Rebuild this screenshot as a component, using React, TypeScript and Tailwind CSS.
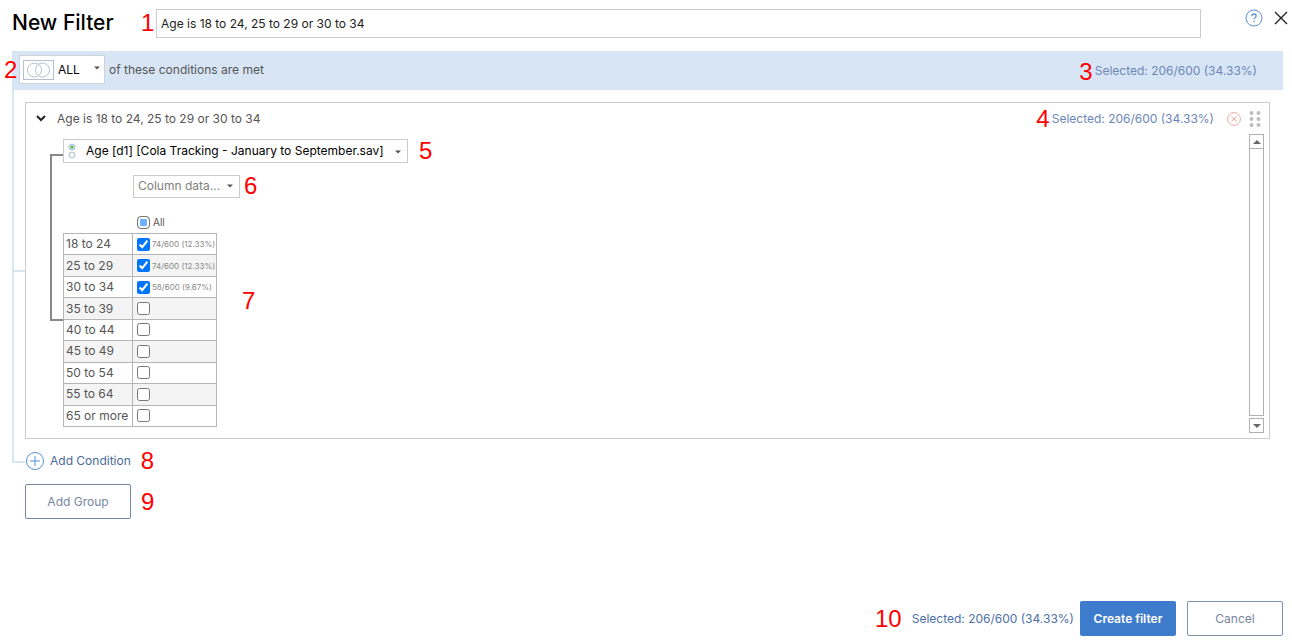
import { useState } from 'react'

const AGES = [
  { label: '18 to 24', count: '74/600 (12.33%)' },
  { label: '25 to 29', count: '74/600 (12.33%)' },
  { label: '30 to 34', count: '58/600 (9.67%)' },
  { label: '35 to 39', count: '' },
  { label: '40 to 44', count: '' },
  { label: '45 to 49', count: '' },
  { label: '50 to 54', count: '' },
  { label: '55 to 64', count: '' },
  { label: '65 or more', count: '' },
]

const SELECTED = 'Selected: 206/600 (34.33%)'

function Marker({ n, className = '' }: { n: number; className?: string }) {
  return (
    <span className={`font-['Liberation_Sans',sans-serif] text-2xl leading-6 text-[#f00] ${className}`}>{n}</span>
  )
}

function Caret({ className = '' }: { className?: string }) {
  return (
    <svg viewBox="0 0 6 4" className={`pointer-events-none absolute h-1 w-1.5 ${className}`}>
      <path d="M0 0.5h6L3 3.5z" fill="#555" />
    </svg>
  )
}

function ScrollBar() {
  return (
    <div className="flex w-[15px] shrink-0 flex-col">
      <button type="button" aria-label="Scroll up" className="flex h-[15px] items-center justify-center border border-[#b0b0b0]">
        <svg viewBox="0 0 8 4" className="h-1 w-2"><path d="M0 4h8L4 0z" fill="#666" /></svg>
      </button>
      <div className="-mt-px mb-0.5 flex-1 border border-[#b0b0b0]" />
      <button type="button" aria-label="Scroll down" className="flex h-[15px] items-center justify-center border border-[#b0b0b0]">
        <svg viewBox="0 0 8 4" className="h-1 w-2"><path d="M0 0h8L4 4z" fill="#666" /></svg>
      </button>
    </div>
  )
}

export default function App() {
  const [name, setName] = useState('Age is 18 to 24, 25 to 29 or 30 to 34')
  const [checked, setChecked] = useState([0, 1, 2])

  const toggle = (i: number) => {
    setChecked((prev) => (prev.includes(i) ? prev.filter((c) => c !== i) : [...prev, i]))
  }

  const toggleAll = () => {
    setChecked((prev) => (prev.length === AGES.length ? [] : AGES.map((_, i) => i)))
  }

  return (
    <main className="flex min-h-screen flex-col bg-white pl-3 font-[Inter,sans-serif] text-xs text-[#555]">

      {/* Header */}
      <header className="flex h-[51px] items-start pt-[9px] pr-0.5">
        <h1 className="w-[129px] text-[21px] leading-7 font-medium whitespace-nowrap text-black">New Filter</h1>
        <Marker n={1} className="w-[15px] pt-0.5" />
        <input
          aria-label="Filter name"
          value={name}
          onChange={(e) => setName(e.target.value)}
          className="h-[29px] min-w-0 flex-1 border border-[#ccc] px-1 text-[#222] outline-none"
        />
        <button type="button" aria-label="Help" className="mr-[11px] ml-11">
          <svg viewBox="0 0 18 18" className="h-[18px] w-[18px]" fill="none" stroke="#5b91d8">
            <circle cx="9" cy="9" r="8" />
            <path d="M6.9 7.2c0-1.4.9-2.2 2.1-2.2s2.1.8 2.1 2c0 1.6-2 1.7-2 3.6" strokeWidth="1.3" />
            <path d="M9.1 11.8v1.4" strokeWidth="1.3" />
          </svg>
        </button>
        <button type="button" aria-label="Close" className="mr-0.5 pt-0.5">
          <svg viewBox="0 0 14 14" className="h-3.5 w-3.5" stroke="#222" strokeWidth="1.4">
            <path d="M1 1l12 12M13 1L1 13" />
          </svg>
        </button>
      </header>

      {/* Group bar */}
      <div className="relative mr-[9px] flex h-[39px] items-center bg-[#d8e5f5] pr-[26px] pb-0.5 pl-[7px]">
        <Marker n={2} className="absolute -left-2" />
        <div className="relative mr-1 flex h-[29px] w-[86px] items-center border border-[#ccd3dd] bg-white pl-[3px]">
          <svg viewBox="0 0 31 20" className="h-5 w-[31px] shrink-0" fill="none" stroke="#b4c0d2">
            <rect x="0.5" y="0.5" width="30" height="19" />
            <circle cx="11.5" cy="10" r="7" />
            <circle cx="19.5" cy="10" r="7" />
          </svg>
          <select aria-label="Match" className="h-full w-full appearance-none pl-1 text-black outline-none">
            <option>ALL</option>
            <option>ANY</option>
          </select>
          <Caret className="top-2.5 right-1" />
        </div>
        <span>of these conditions are met</span>
        <Marker n={3} className="ml-auto pt-1" />
        <span className="ml-0.5 pt-0.5 text-[#6b87b8]">{SELECTED}</span>
      </div>

      {/* Tree */}
      <div className="flex pr-[22px]">
        <div className="flex w-[13px] shrink-0 flex-col pb-2.5">
          <div className="h-[182px] border-b-2 border-l-2 border-[#d8e5f5]" />
          <div className="flex-1 border-b-2 border-l-2 border-[#d8e5f5]" />
        </div>

        <div className="min-w-0 flex-1 pt-3">
          <section className="border border-[#ccc] pr-[5px] pb-[5px] pl-2.5">
            <div className="flex h-[31px] items-center">
              <button type="button" aria-label="Collapse" className="mr-[11px]">
                <svg viewBox="0 0 10 7" className="h-[7px] w-2.5" fill="none" stroke="#222" strokeWidth="2">
                  <path d="M1 1l4 4 4-4" />
                </svg>
              </button>
              <span>Age is 18 to 24, 25 to 29 or 30 to 34</span>
              <Marker n={4} className="ml-auto" />
              <span className="ml-0.5 text-[#6b87b8]">{SELECTED}</span>
              <button type="button" aria-label="Remove condition" className="mr-2 ml-[13px]">
                <svg viewBox="0 0 14 14" className="h-3.5 w-3.5" fill="none" stroke="#efa9a2">
                  <circle cx="7" cy="7" r="6.4" />
                  <path d="M4.5 4.5l5 5M9.5 4.5l-5 5" />
                </svg>
              </button>
              <svg viewBox="0 0 12 16" className="mr-[3px] h-4 w-3" fill="#bdbdbd">
                <circle cx="2.5" cy="2" r="2" />
                <circle cx="9.5" cy="2" r="2" />
                <circle cx="2.5" cy="8" r="2" />
                <circle cx="9.5" cy="8" r="2" />
                <circle cx="2.5" cy="14" r="2" />
                <circle cx="9.5" cy="14" r="2" />
              </svg>
            </div>

            <div className="flex">
              <div className="mt-5 ml-3.5 h-[167px] w-[13px] shrink-0 border-y-2 border-l-2 border-[#888]" />

              <div className="min-w-0 flex-1 pt-[5px] pb-1.5">
                <div className="flex items-center gap-[11px]">
                  <div className="relative h-6 w-[345px] border border-[#ccc]">
                    <svg viewBox="0 0 10 16" className="pointer-events-none absolute top-[3px] left-[3px] h-4 w-2.5" fill="none" stroke="#a9bbce">
                      <circle cx="5" cy="4" r="3" fill="#e3eef2" />
                      <circle cx="5" cy="4" r="1.6" fill="#4db848" stroke="none" />
                      <circle cx="5" cy="12" r="3" />
                    </svg>
                    <select aria-label="Variable" className="h-full w-full appearance-none pl-[22px] text-black outline-none">
                      <option>Age [d1] [Cola Tracking - January to September.sav]</option>
                    </select>
                    <Caret className="top-2.5 right-1.5" />
                  </div>
                  <Marker n={5} />
                </div>

                <div className="mt-[11px] ml-[70px] flex items-center gap-1">
                  <div className="relative h-[23px] w-[107px] border border-[#ccc]">
                    <select aria-label="Column data" className="h-full w-full appearance-none pl-1 text-[#808080] outline-none">
                      <option>Column data...</option>
                    </select>
                    <Caret className="top-2 right-1.5" />
                  </div>
                  <Marker n={6} />
                </div>

                <label className="mt-[18px] mb-1 ml-[74px] flex h-[13px] items-center gap-[3px] text-[10px]">
                  <input
                    type="checkbox"
                    checked={checked.length === AGES.length}
                    onChange={toggleAll}
                    className="h-[13px] w-[13px] appearance-none rounded-sm border border-[#767676] bg-[#6cb0ff] shadow-[inset_0_0_0_2px_white]"
                  />
                  All
                </label>

                <div className="flex items-start gap-[25px]">
                  <table className="h-[194px] w-[154px] table-fixed border-collapse">
                    <tbody>
                      {AGES.map((age, i) => (
                        <tr key={age.label} className="even:bg-[#f4f4f4]">
                          <th className="w-[69px] border border-[#b5b5b5] p-0 pl-0.5 text-left font-normal whitespace-nowrap">
                            <label htmlFor={`age-${i}`}>{age.label}</label>
                          </th>
                          <td className="border border-[#b5b5b5] p-0 pl-1">
                            <div className="flex items-center gap-0.5 text-[8px] leading-3 whitespace-nowrap text-[#888]">
                              <input
                                type="checkbox" id={`age-${i}`}
                                checked={checked.includes(i)} onChange={() => toggle(i)}
                                className="h-[13px] w-[13px]"
                              />
                              {age.count}
                            </div>
                          </td>
                        </tr>
                      ))}
                    </tbody>
                  </table>
                  <Marker n={7} className="pt-14" />
                </div>
              </div>

              <ScrollBar />
            </div>
          </section>

          <div className="mt-2.5 flex h-6 items-center gap-2.5">
            <button type="button" className="flex items-center gap-[5px] text-[#4a6a9c]">
              <svg viewBox="0 0 20 20" className="h-5 w-5" fill="none" stroke="#5b8ed6">
                <circle cx="10" cy="10" r="8.5" />
                <path d="M5 10h10M10 5v10" />
              </svg>
              Add Condition
            </button>
            <Marker n={8} />
          </div>
        </div>
      </div>

      <div className="mt-[11px] ml-[13px] flex items-center gap-2.5">
        <button type="button" className="h-[35px] w-[106px] rounded-xs border border-[#76869e] text-[#76869e]">Add Group</button>
        <Marker n={9} />
      </div>

      {/* Footer */}
      <footer className="mt-auto flex items-center justify-end pr-[9px] pb-1.5">
        <Marker n={10} className="mr-2.5" />
        <span className="mr-1.5 text-[#4d6fa8]">{SELECTED}</span>
        <button type="button" className="mr-[11px] h-[35px] w-24 rounded-xs bg-[#3d7ccc] font-semibold text-white">Create filter</button>
        <button type="button" className="h-[35px] w-24 rounded-xs border border-[#8190ac] text-[#76869e]">Cancel</button>
      </footer>
    </main>
  )
}
